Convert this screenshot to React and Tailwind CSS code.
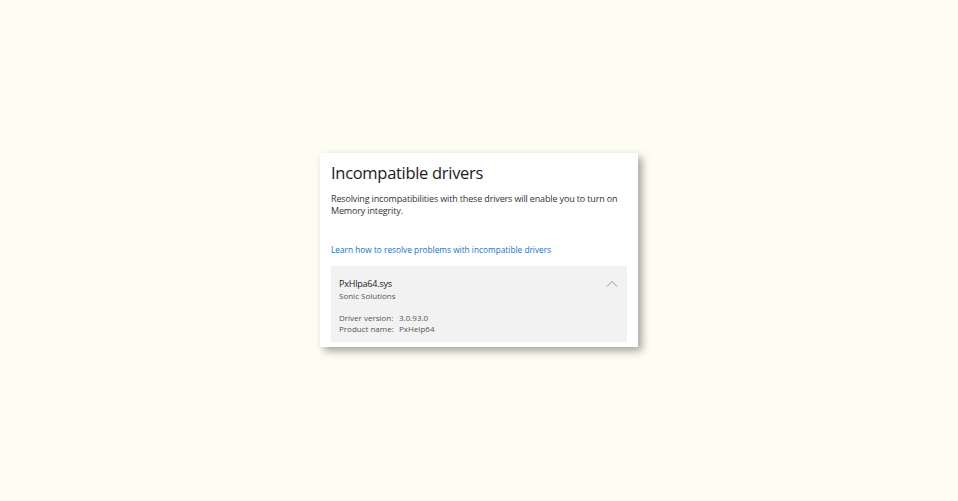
export default function App() {
  return (
    <main className="flex h-[501px] w-full items-start justify-center bg-[#fdfdf2] pt-[153px] font-['Open_Sans',sans-serif]">
      <section className="w-[318px] bg-white px-[11px] pb-[5px] pt-[8px] shadow-[4px_4px_8px_rgba(0,0,0,0.35)]">
        <h1 className="text-[16.5px] leading-[24px] tracking-[-0.3px] text-[#1b1b1b]">Incompatible drivers</h1>
        <p className="mt-[8px] text-[9px] leading-[12px] tracking-[-0.15px] text-[#333]">
          Resolving incompatibilities with these drivers will enable you to turn on Memory integrity.
        </p>
        <a href="#" className="mt-[27px] block text-[8.3px] leading-[12px] text-[#1f70b8]">
          Learn how to resolve problems with incompatible drivers
        </a>
        <div className="mt-[10px] bg-[#f2f2f2] px-[8px] pb-[8px] pt-[11px]">
          <div className="flex items-start justify-between">
            <div>
              <p className="text-[9px] leading-[13px] tracking-[-0.2px] text-[#1b1b1b]">PxHlpa64.sys</p>
              <p className="text-[8px] leading-[12px] text-[#555]">Sonic Solutions</p>
            </div>
            <svg width="12" height="8" viewBox="0 0 12 8" className="mr-[1px] mt-[3px]">
              <path d="M1 6.5 L6 1.5 L11 6.5" fill="none" stroke="#888" strokeWidth="0.9" />
            </svg>
          </div>
          <div className="mt-[10px] flex flex-col text-[8px] leading-[11px] text-[#555]">
            <div className="flex">
              <span className="w-[60px] shrink-0">Driver version:</span>
              <span>3.0.93.0</span>
            </div>
            <div className="flex">
              <span className="w-[60px] shrink-0">Product name:</span>
              <span>PxHelp64</span>
            </div>
          </div>
        </div>
      </section>
    </main>
  );
}
